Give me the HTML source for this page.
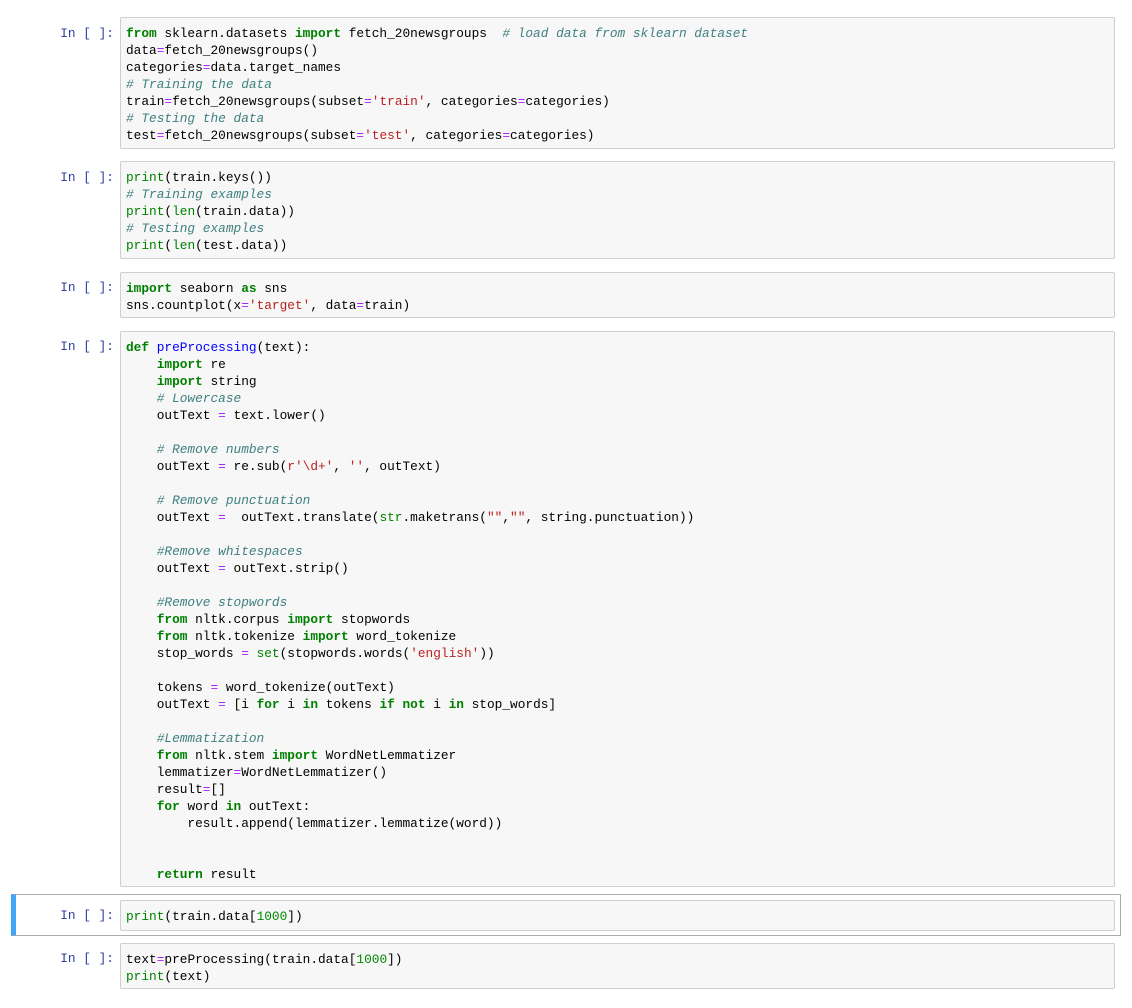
<!DOCTYPE html>
<html><head><meta charset="utf-8"><style>
body{margin:0;background:#fff;width:1132px;height:1008px;position:relative;overflow:hidden;font-family:"Liberation Mono",monospace;}
.p{position:absolute;left:20px;width:94px;text-align:right;color:#303F9F;font-size:12.8px;line-height:17px;margin-top:1px;}
.b{position:absolute;left:120px;width:995px;background:#f7f7f7;border:1px solid #cfcfcf;border-radius:2px;box-sizing:border-box;}
pre{margin:0;padding:7px 5px 5px;font-family:"Liberation Mono",monospace;font-size:12.8px;line-height:17px;color:#000;}
.k{color:#008000;font-weight:bold}.o{color:#AA22FF}.c{color:#408080;font-style:italic}.s{color:#BA2121}.bi{color:#008000}.n{color:#080}.f{color:#0000FF}
.sel{position:absolute;left:11px;top:894px;width:1110px;height:42px;border:1px solid #ababab;box-sizing:border-box;border-left:5px solid #42A5F5;}
</style></head><body>
<div class="p" style="top:24px">In [ ]:</div>
<div class="b" style="top:17px;height:132px"><pre><span class="k">from</span> sklearn.datasets <span class="k">import</span> fetch_20newsgroups  <span class="c"># load data from sklearn dataset</span>
data<span class="o">=</span>fetch_20newsgroups()
categories<span class="o">=</span>data.target_names
<span class="c"># Training the data</span>
train<span class="o">=</span>fetch_20newsgroups(subset<span class="o">=</span><span class="s">'train'</span>, categories<span class="o">=</span>categories)
<span class="c"># Testing the data</span>
test<span class="o">=</span>fetch_20newsgroups(subset<span class="o">=</span><span class="s">'test'</span>, categories<span class="o">=</span>categories)</pre></div>

<div class="p" style="top:168px">In [ ]:</div>
<div class="b" style="top:161px;height:98px"><pre><span class="bi">print</span>(train.keys())
<span class="c"># Training examples</span>
<span class="bi">print</span>(<span class="bi">len</span>(train.data))
<span class="c"># Testing examples</span>
<span class="bi">print</span>(<span class="bi">len</span>(test.data))</pre></div>

<div class="p" style="top:278px">In [ ]:</div>
<div class="b" style="top:272px;height:46px"><pre><span class="k">import</span> seaborn <span class="k">as</span> sns
sns.countplot(x<span class="o">=</span><span class="s">'target'</span>, data<span class="o">=</span>train)</pre></div>

<div class="p" style="top:337px">In [ ]:</div>
<div class="b" style="top:331px;height:556px"><pre><span class="k">def</span> <span class="f">preProcessing</span>(text):
    <span class="k">import</span> re
    <span class="k">import</span> string
    <span class="c"># Lowercase</span>
    outText <span class="o">=</span> text.lower()

    <span class="c"># Remove numbers</span>
    outText <span class="o">=</span> re.sub(<span class="s">r'\d+'</span>, <span class="s">''</span>, outText)

    <span class="c"># Remove punctuation</span>
    outText <span class="o">=</span>  outText.translate(<span class="bi">str</span>.maketrans(<span class="s">""</span>,<span class="s">""</span>, string.punctuation))

    <span class="c">#Remove whitespaces</span>
    outText <span class="o">=</span> outText.strip()

    <span class="c">#Remove stopwords</span>
    <span class="k">from</span> nltk.corpus <span class="k">import</span> stopwords
    <span class="k">from</span> nltk.tokenize <span class="k">import</span> word_tokenize
    stop_words <span class="o">=</span> <span class="bi">set</span>(stopwords.words(<span class="s">'english'</span>))

    tokens <span class="o">=</span> word_tokenize(outText)
    outText <span class="o">=</span> [i <span class="k">for</span> i <span class="k">in</span> tokens <span class="k">if</span> <span class="k">not</span> i <span class="k">in</span> stop_words]

    <span class="c">#Lemmatization</span>
    <span class="k">from</span> nltk.stem <span class="k">import</span> WordNetLemmatizer
    lemmatizer<span class="o">=</span>WordNetLemmatizer()
    result<span class="o">=</span>[]
    <span class="k">for</span> word <span class="k">in</span> outText:
        result.append(lemmatizer.lemmatize(word))


    <span class="k">return</span> result</pre></div>

<div class="sel"></div>
<div class="p" style="top:906px">In [ ]:</div>
<div class="b" style="top:900px;height:31px"><pre><span class="bi">print</span>(train.data[<span class="n">1000</span>])</pre></div>

<div class="p" style="top:949px">In [ ]:</div>
<div class="b" style="top:943px;height:46px"><pre>text<span class="o">=</span>preProcessing(train.data[<span class="n">1000</span>])
<span class="bi">print</span>(text)</pre></div>
</body></html>
